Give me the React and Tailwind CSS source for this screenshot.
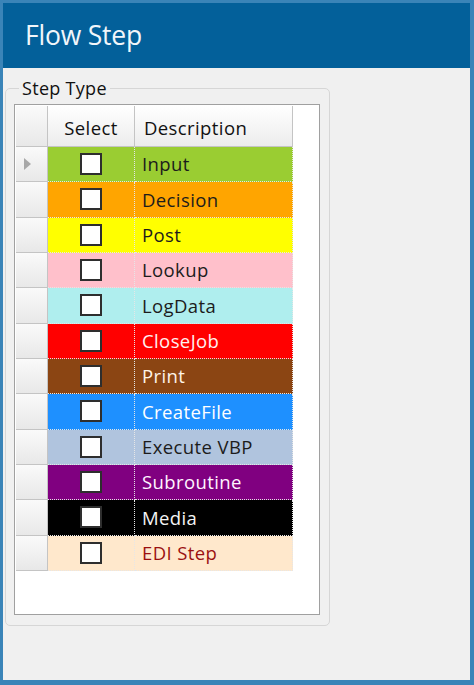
import React from 'react';

const steps = [
  { name: 'Input', bg: 'bg-[#9acd32]', fg: 'text-[#1c1c1c]' },
  { name: 'Decision', bg: 'bg-[#ffa500]', fg: 'text-[#1c1c1c]' },
  { name: 'Post', bg: 'bg-[#ffff00]', fg: 'text-[#1c1c1c]' },
  { name: 'Lookup', bg: 'bg-[#ffc0cb]', fg: 'text-[#1c1c1c]' },
  { name: 'LogData', bg: 'bg-[#afeeee]', fg: 'text-[#1c1c1c]' },
  { name: 'CloseJob', bg: 'bg-[#ff0000]', fg: 'text-[#fff0f0]' },
  { name: 'Print', bg: 'bg-[#8b4513]', fg: 'text-[#fff4e8]' },
  { name: 'CreateFile', bg: 'bg-[#1e90ff]', fg: 'text-[#ffffff]' },
  { name: 'Execute VBP', bg: 'bg-[#b0c4de]', fg: 'text-[#1c1c1c]' },
  { name: 'Subroutine', bg: 'bg-[#800080]', fg: 'text-[#fff4ff]' },
  { name: 'Media', bg: 'bg-[#000000]', fg: 'text-[#f4f4f4]' },
  { name: 'EDI Step', bg: 'bg-[#ffe8cc]', fg: 'text-[#9b1010]' },
];

const RowHeader = ({ current, tall }) => (
  <div
    className={`w-[32px] ${tall ? 'h-[41px]' : 'h-[35.33px]'} shrink-0 flex items-center pl-[8px] bg-gradient-to-b from-[#fafafa] to-[#e8e8e8] border-r border-b border-[#c4c4c4]`}
  >
    {current && (
      <svg width="7" height="12" viewBox="0 0 7 12">
        <path d="M0 0 L7 6 L0 12 Z" fill="#a8a8a8" />
      </svg>
    )}
  </div>
);

export default function App() {
  return (
    <div
      className="w-[474px] h-[685px] bg-[#3a84b8] pt-[3px] pl-[3px] pr-[4px] pb-[5px] flex flex-col"
      style={{ fontFamily: '"Open Sans", "Noto Sans", sans-serif' }}
    >
      <div className="h-[65px] shrink-0 bg-[#03609a] flex items-center pl-[22px]">
        <span className="text-[26.5px] text-[#f2f6fa] tracking-[-0.2px]">Flow Step</span>
      </div>

      <div className="flex-1 bg-[#f0f0f0] pl-[2px] pt-[8px]">
        <fieldset className="w-[325px] h-[550px] border border-[#d6d6d6] rounded-[5px] px-[8px]">
          <legend className="ml-[5px] px-[3px] text-[18px] leading-[24px] tracking-[0.3px] text-[#111]">Step Type</legend>

          <div className="mt-[4px] w-[306px] h-[511px] bg-white border border-[#a0a0a0] p-[1px] text-[18.5px] tracking-[0.4px]">
            {/* header */}
            <div className="flex">
              <RowHeader tall />
              <div className="w-[87px] h-[41px] flex items-center justify-center pt-[3px] bg-gradient-to-b from-[#ffffff] to-[#ececec] border-r border-b border-[#c4c4c4] text-[#111]">
                Select
              </div>
              <div className="w-[158px] h-[41px] flex items-center pl-[9px] pt-[3px] bg-gradient-to-b from-[#ffffff] to-[#ececec] border-r border-b border-[#c4c4c4] text-[#111]">
                Description
              </div>
            </div>

            {steps.map((s, i) => (
              <div key={s.name} className="flex">
                <RowHeader current={i === 0} />
                <div className={`w-[87px] h-[35.33px] flex items-center justify-center ${s.bg} border-r border-b border-dotted border-[#e6e6e6]`}>
                  <div className="w-[22px] h-[22px] bg-white border-2 border-[#2e2e2e]" />
                </div>
                <div className={`w-[158px] h-[35.33px] flex items-center pl-[7px] ${s.bg} ${s.fg} border-r border-b border-dotted border-[#e6e6e6]`}>
                  {s.name}
                </div>
              </div>
            ))}
          </div>
        </fieldset>
      </div>
    </div>
  );
}
